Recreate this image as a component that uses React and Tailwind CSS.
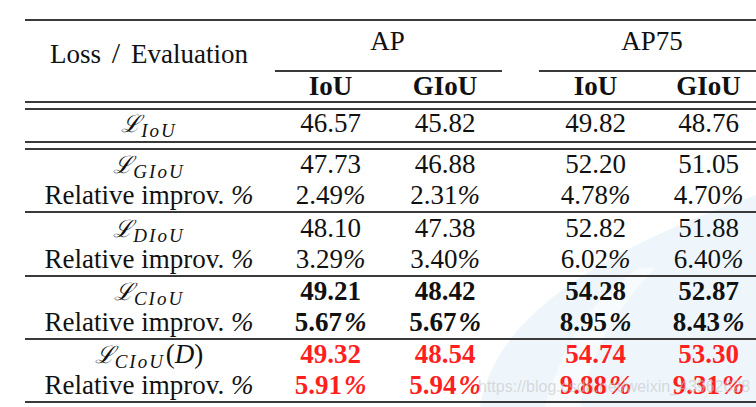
import React from 'react';

const cols = 'grid grid-cols-[248px_115px_114px_37px_113px_113px]';
const RED = 'text-[#ff1f1f]';

const Rule = ({ className = '' }) => <div className={`h-[2px] bg-[#3a3a3a] ${className}`} />;

const Pct = ({ v, bold }) => (
  <span>
    {v}
    <span className={bold ? 'ml-[2px] italic' : 'italic'}>%</span>
  </span>
);

const LossName = ({ sub, suffix }) => (
  <span className="inline-flex items-baseline">
    <span className="font-[family-name:DejaVu_Serif,serif] text-[24px] italic">ℒ</span>
    <span className="relative top-[5px] text-[19px] italic tracking-[2px]">{sub}</span>
    {suffix && (
      <span className="ml-[1px]">
        (<span className="italic">D</span>)
      </span>
    )}
  </span>
);

const Section = ({ sub, suffix, main, rel, tone = 'plain', pad = '' }) => {
  const cls = tone === 'red' ? `font-bold ${RED}` : tone === 'bold' ? 'font-bold' : '';
  return (
    <div className={`flex h-[61px] flex-col leading-[29px] ${pad}`}>
      <div className={cols}>
        <div className="text-center">
          <LossName sub={sub} suffix={suffix} />
        </div>
        <div className={`text-center ${cls}`}>{main[0]}</div>
        <div className={`text-center ${cls}`}>{main[1]}</div>
        <div />
        <div className={`text-center ${cls}`}>{main[2]}</div>
        <div className={`text-center ${cls}`}>{main[3]}</div>
      </div>
      <div className={cols}>
        <div className="text-center">
          Relative improv. <span className="italic">%</span>
        </div>
        {rel.map((r, i) => (
          <React.Fragment key={i}>
            {i === 2 && <div />}
            <div className={`text-center ${cls}`}>
              <Pct v={r} bold={tone !== 'plain'} />
            </div>
          </React.Fragment>
        ))}
      </div>
    </div>
  );
};

export default function App() {
  return (
    <div className="relative h-[407px] w-[756px] overflow-hidden bg-white font-[family-name:Liberation_Serif,Times_New_Roman,serif] text-[27px] text-[#111]">
      <svg className="absolute inset-0" width="756" height="407" viewBox="0 0 756 407">
        <path d="M480 407 C 492 335, 560 265, 756 195 L 756 407 Z" fill="#eef6fc" />
        <path d="M545 407 C 565 335, 600 290, 640 268 L 655 268 C 620 305, 590 350, 580 407 Z" fill="#f7fbfe" />
      </svg>

      <div className="relative ml-[25px] w-[740px] pt-[19px]">
        <Rule />
        {/* header */}
        <div className={`${cols} grid-rows-[49px_2px_29px]`}>
          <div className="row-span-3 pt-[17px] text-center leading-[30px]">
            Loss <span className="mx-[4px] inline-block text-[30px]">/</span> Evaluation
          </div>
          <div className="col-span-2 col-start-2 pt-[5px] text-center leading-[30px]">AP</div>
          <div className="col-span-2 col-start-5 pt-[5px] text-center leading-[30px]">AP75</div>
          <div className="col-span-2 col-start-2 ml-[2px] h-[1.5px] bg-[#3a3a3a]" />
          <div className="col-span-2 col-start-5 h-[1.5px] bg-[#3a3a3a]" />
          <div className="col-start-2 text-center font-bold leading-[29px]">IoU</div>
          <div className="text-center font-bold leading-[29px]">GIoU</div>
          <div className="col-start-5 text-center font-bold leading-[29px]">IoU</div>
          <div className="text-center font-bold leading-[29px]">GIoU</div>
        </div>
        <Rule />
        <div className="h-[5px]" />
        <Rule />
        <div className={`${cols} h-[31px] leading-[26px]`}>
          <div className="text-center">
            <LossName sub="IoU" />
          </div>
          <div className="text-center">46.57</div>
          <div className="text-center">45.82</div>
          <div />
          <div className="text-center">49.82</div>
          <div className="text-center">48.76</div>
        </div>
        <Rule />
        <div className="h-[5px]" />
        <Rule />
        <Section sub="GIoU" main={['47.73', '46.88', '52.20', '51.05']} rel={['2.49', '2.31', '4.78', '4.70']} />
        <Rule />
        <Section sub="DIoU" pad="pt-[1px] h-[62px]" main={['48.10', '47.38', '52.82', '51.88']} rel={['3.29', '3.40', '6.02', '6.40']} />
        <Rule />
        <Section sub="CIoU" tone="bold" main={['49.21', '48.42', '54.28', '52.87']} rel={['5.67', '5.67', '8.95', '8.43']} />
        <Rule />
        <Section sub="CIoU" suffix tone="red" main={['49.32', '48.54', '54.74', '53.30']} rel={['5.91', '5.94', '9.88', '9.31']} />
        <Rule />
      </div>

      <div className="pointer-events-none absolute left-[478px] top-[378px] font-[family-name:Liberation_Sans,sans-serif] text-[16px] leading-[18px] text-[#c4c4c4]/60">
        https://blog.csdn.net/weixin_43962628
      </div>
    </div>
  );
}
